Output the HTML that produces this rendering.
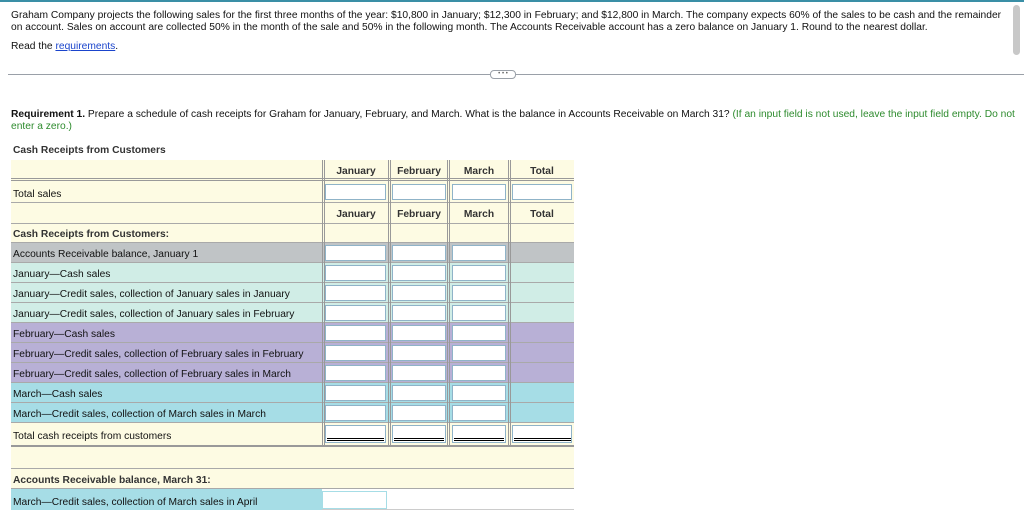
<!DOCTYPE html>
<html><head><style>
*{margin:0;padding:0;box-sizing:border-box}
body{width:1024px;height:524px;background:#fff;font-family:"Liberation Sans",Arial,sans-serif;font-size:10.25px;color:#111;position:relative;overflow:hidden}
.a{position:absolute;white-space:nowrap}
.row{position:absolute;left:11px;width:563px;border-bottom:1px solid #a9a9a9}
.lbl{position:absolute;left:2px;bottom:2px}
.in{position:absolute;background:#fff;border:1px solid #8fb3c8;height:16px}
.vs{position:absolute;top:160px;height:287px;width:3px;border-left:1px solid #999;border-right:1px solid #999}
.h{position:absolute;font-weight:bold;color:#333;width:60px;text-align:center}
.dbl{position:absolute;height:3px;border-top:1px solid #000;border-bottom:1px solid #000}
</style></head><body>
<div class="a" style="left:0;top:0;width:1024px;height:2px;background:#3a8fa6"></div>
<div class="a" style="left:1013px;top:5px;width:7px;height:50px;background:#c8c8c8;border-radius:4px"></div>
<div class="a" style="left:11px;top:10px;line-height:12px">Graham Company projects the following sales for the first three months of the year: $10,800 in January; $12,300 in February; and $12,800 in March. The company expects 60% of the sales to be cash and the remainder<br>on account. Sales on account are collected 50% in the month of the sale and 50% in the following month. The Accounts Receivable account has a zero balance on January 1. Round to the nearest dollar.</div>
<div class="a" style="left:11px;top:41px">Read the <span style="color:#1a44cc;text-decoration:underline">requirements</span>.</div>
<div class="a" style="left:8px;top:74px;width:1016px;height:1px;background:#9aa0a8"></div>
<div class="a" style="left:490px;top:70px;width:26px;height:9px;border:1px solid #9aa0a8;border-radius:4px;background:#fff;font-size:6px;line-height:6px;text-align:center;color:#666">• • •</div>
<div class="a" style="left:11px;top:109px;line-height:12px"><b>Requirement 1.</b> Prepare a schedule of cash receipts for Graham for January, February, and March. What is the balance in Accounts Receivable on March 31? <span style="color:#2e8b2e">(If an input field is not used, leave the input field empty. Do not<br>enter a zero.)</span></div>
<div class="a" style="left:13px;top:145px;font-weight:bold;color:#333">Cash Receipts from Customers</div>

<div class="row" style="top:160px;height:21px;background:#fdfbe3;border-bottom:3px double #999"></div>
<div class="row" style="top:181px;height:22px;background:#fdfbe3"><span class="lbl">Total sales</span></div>
<div class="row" style="top:203px;height:21px;background:#fdfbe3"></div>
<div class="row" style="top:224px;height:19px;background:#fdfbe3"><span class="lbl" style="font-weight:bold;color:#333">Cash Receipts from Customers:</span></div>
<div class="row" style="top:243px;height:20px;background:#c0c4c6"><span class="lbl">Accounts Receivable balance, January 1</span></div>
<div class="row" style="top:263px;height:20px;background:#d0ede6"><span class="lbl">January—Cash sales</span></div>
<div class="row" style="top:283px;height:20px;background:#d0ede6"><span class="lbl">January—Credit sales, collection of January sales in January</span></div>
<div class="row" style="top:303px;height:20px;background:#d0ede6"><span class="lbl">January—Credit sales, collection of January sales in February</span></div>
<div class="row" style="top:323px;height:20px;background:#b8b0d6"><span class="lbl">February—Cash sales</span></div>
<div class="row" style="top:343px;height:20px;background:#b8b0d6"><span class="lbl">February—Credit sales, collection of February sales in February</span></div>
<div class="row" style="top:363px;height:20px;background:#b8b0d6"><span class="lbl">February—Credit sales, collection of February sales in March</span></div>
<div class="row" style="top:383px;height:20px;background:#a6dde6"><span class="lbl">March—Cash sales</span></div>
<div class="row" style="top:403px;height:20px;background:#a6dde6"><span class="lbl">March—Credit sales, collection of March sales in March</span></div>
<div class="row" style="top:423px;height:24px;background:#fdfbe3;border-bottom:2px solid #999"><span class="lbl" style="bottom:3px">Total cash receipts from customers</span></div>
<div class="row" style="top:447px;height:22px;background:#fdfbe3"></div>
<div class="row" style="top:469px;height:20px;background:#fdfbe3"><span class="lbl" style="font-weight:bold;color:#333">Accounts Receivable balance, March 31:</span></div>
<div class="row" style="top:489px;height:21px;background:#fff;border-bottom:1px solid #ccc"></div>
<div class="a" style="left:11px;top:489px;width:311px;height:21px;background:#a6dde6"><span class="lbl">March—Credit sales, collection of March sales in April</span></div>

<div class="vs" style="left:322px"></div>
<div class="vs" style="left:388px"></div>
<div class="vs" style="left:447px"></div>
<div class="vs" style="left:508px"></div>

<div class="h" style="left:326px;top:166px">January</div>
<div class="h" style="left:389px;top:166px">February</div>
<div class="h" style="left:449px;top:166px">March</div>
<div class="h" style="left:512px;top:166px">Total</div>
<div class="h" style="left:326px;top:209px">January</div>
<div class="h" style="left:389px;top:209px">February</div>
<div class="h" style="left:449px;top:209px">March</div>
<div class="h" style="left:512px;top:209px">Total</div>

<div class="in" style="left:325px;top:184px;width:61px"></div>
<div class="in" style="left:392px;top:184px;width:54px"></div>
<div class="in" style="left:452px;top:184px;width:54px"></div>
<div class="in" style="left:512px;top:184px;width:60px"></div>

<div class="in" style="left:325px;top:245px;width:61px"></div><div class="in" style="left:392px;top:245px;width:54px"></div><div class="in" style="left:452px;top:245px;width:54px"></div>
<div class="in" style="left:325px;top:265px;width:61px"></div><div class="in" style="left:392px;top:265px;width:54px"></div><div class="in" style="left:452px;top:265px;width:54px"></div>
<div class="in" style="left:325px;top:285px;width:61px"></div><div class="in" style="left:392px;top:285px;width:54px"></div><div class="in" style="left:452px;top:285px;width:54px"></div>
<div class="in" style="left:325px;top:305px;width:61px"></div><div class="in" style="left:392px;top:305px;width:54px"></div><div class="in" style="left:452px;top:305px;width:54px"></div>
<div class="in" style="left:325px;top:325px;width:61px"></div><div class="in" style="left:392px;top:325px;width:54px"></div><div class="in" style="left:452px;top:325px;width:54px"></div>
<div class="in" style="left:325px;top:345px;width:61px"></div><div class="in" style="left:392px;top:345px;width:54px"></div><div class="in" style="left:452px;top:345px;width:54px"></div>
<div class="in" style="left:325px;top:365px;width:61px"></div><div class="in" style="left:392px;top:365px;width:54px"></div><div class="in" style="left:452px;top:365px;width:54px"></div>
<div class="in" style="left:325px;top:385px;width:61px"></div><div class="in" style="left:392px;top:385px;width:54px"></div><div class="in" style="left:452px;top:385px;width:54px"></div>
<div class="in" style="left:325px;top:405px;width:61px"></div><div class="in" style="left:392px;top:405px;width:54px"></div><div class="in" style="left:452px;top:405px;width:54px"></div>

<div class="in" style="left:325px;top:425px;width:61px;height:18px"></div><div class="dbl" style="left:327px;top:438px;width:57px"></div>
<div class="in" style="left:392px;top:425px;width:54px;height:18px"></div><div class="dbl" style="left:394px;top:438px;width:50px"></div>
<div class="in" style="left:452px;top:425px;width:54px;height:18px"></div><div class="dbl" style="left:454px;top:438px;width:50px"></div>
<div class="in" style="left:512px;top:425px;width:60px;height:18px"></div><div class="dbl" style="left:514px;top:438px;width:57px"></div>

<div class="in" style="left:322px;top:491px;width:65px;height:18px;border-color:#a6dde6"></div>
</body></html>
